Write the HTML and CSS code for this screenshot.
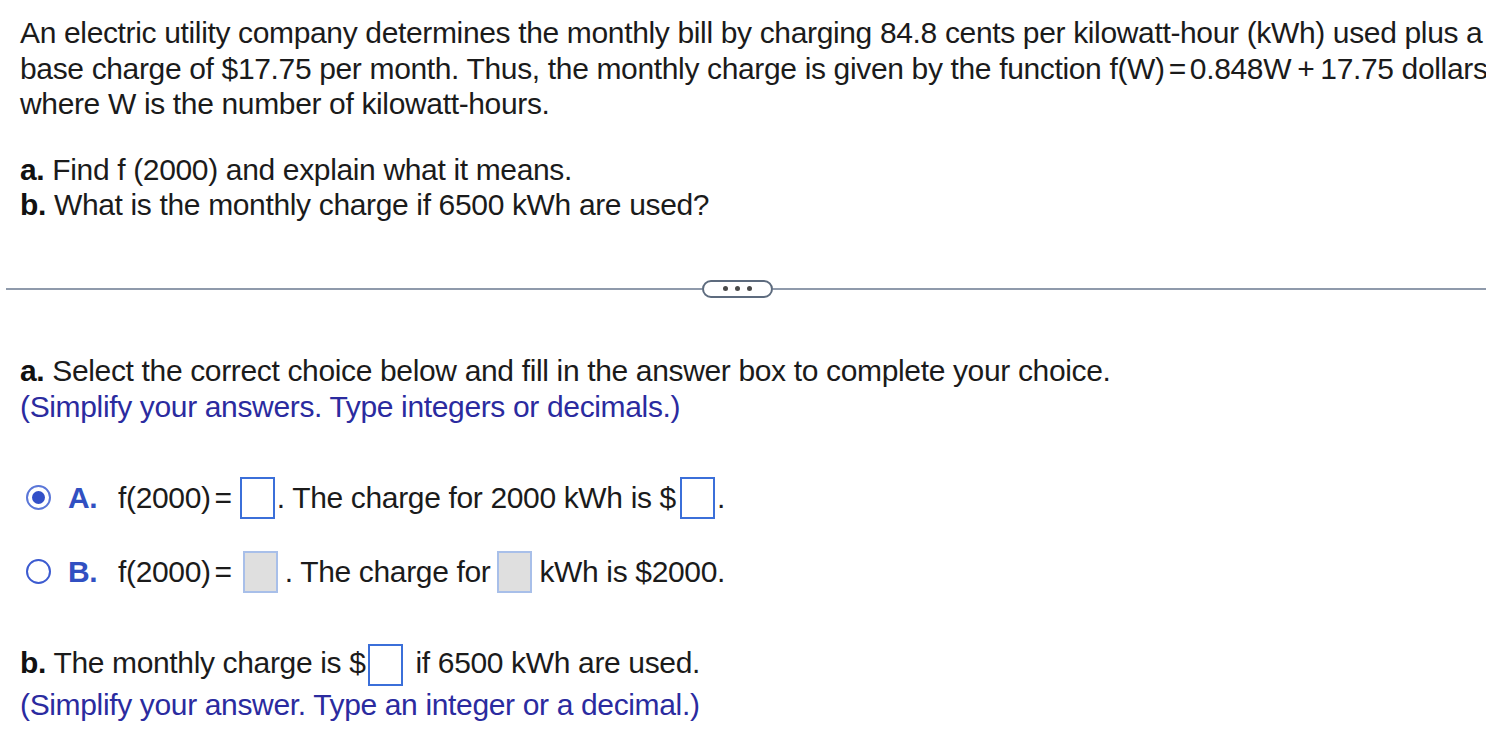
FILE: index.html
```html
<!DOCTYPE html>
<html>
<head>
<meta charset="utf-8">
<link rel="stylesheet" href="styles.css">
</head>
<body>
<div class="page">
  <div class="problem">
    <p class="line">An electric utility company determines the monthly bill by charging 84.8 cents per kilowatt-hour (kWh) used plus a</p>
    <p class="line">base charge of $17.75 per month. Thus, the monthly charge is given by the function <span class="math">f(W)<span class="eq">=</span>0.848W<span class="op">+</span>17.75</span> dollars,</p>
    <p class="line">where W is the number of kilowatt-hours.</p>
    <div class="parts">
      <p class="line"><b>a.</b> Find f (2000) and explain what it means.</p>
      <p class="line"><b>b.</b> What is the monthly charge if 6500 kWh are used?</p>
    </div>
  </div>

  <div class="divider">
    <div class="rule rule-left"></div>
    <div class="pill"><span class="dot"></span><span class="dot"></span><span class="dot"></span></div>
    <div class="rule"></div>
  </div>

  <div class="answer">
    <p class="line"><b>a.</b> Select the correct choice below and fill in the answer box to complete your choice.</p>
    <p class="line hint">(Simplify your answers. Type integers or decimals.)</p>

    <div class="choices">
      <div class="choice">
        <span class="radio checked"><span class="radio-dot"></span></span>
        <span class="letter">A.</span>
        <span class="choice-text"><span class="math">f(2000)<span class="eq">=</span></span><span class="box"></span>. The charge for 2000 kWh is $<span class="box"></span>.</span>
      </div>
      <div class="choice">
        <span class="radio"></span>
        <span class="letter">B.</span>
        <span class="choice-text"><span class="math">f(2000)<span class="eq">=</span></span><span class="box disabled"></span>. The charge for <span class="box disabled"></span> kWh is $2000.</span>
      </div>
    </div>

    <div class="part-b">
      <p class="line"><b>b.</b> The monthly charge is $<span class="box"></span> if 6500 kWh are used.</p>
      <p class="line hint">(Simplify your answer. Type an integer or a decimal.)</p>
    </div>
  </div>
</div>
</body>
</html>
```

FILE: styles.css
```css
html, body {
  margin: 0;
  padding: 0;
  background: #ffffff;
  overflow: hidden;
}

body {
  width: 1486px;
  height: 733px;
  font-family: "Liberation Sans", Arial, sans-serif;
  font-size: 30px;
  letter-spacing: -0.35px;
  line-height: 35.5px;
  color: #1b1b1b;
}

.page {
  padding-top: 15px;
}

.problem, .answer {
  padding-left: 20px;
}

.line {
  margin: 0;
  white-space: nowrap;
}

b {
  font-weight: bold;
  color: #111;
}

.parts {
  margin-top: 30px;
}

.math .eq {
  padding: 0 4px;
}

.math .op {
  padding: 0 6px;
}

.divider {
  display: flex;
  align-items: center;
  margin-top: 57px;
  margin-left: 6px;
}

.rule {
  flex: 1;
  height: 2px;
  background: #8f9aab;
}

.rule-left {
  flex: 0 0 696px;
}

.pill {
  width: 67px;
  height: 14px;
  border: 2px solid #5d6b7e;
  border-radius: 9px;
  display: flex;
  justify-content: center;
  align-items: center;
  gap: 7px;
  background: #fff;
}

.dot {
  width: 5px;
  height: 5px;
  border-radius: 50%;
  background: #4a4a4a;
}

.answer {
  margin-top: 55px;
}

.hint {
  color: #2b2b9f;
  margin-top: 1px;
}

.choices {
  margin-top: 52px;
  padding-left: 6px;
  display: flex;
  flex-direction: column;
  gap: 32px;
}

.choice {
  display: flex;
  align-items: center;
  height: 42px;
  white-space: nowrap;
}

.radio {
  width: 21px;
  height: 21px;
  border: 2px solid #3c5bd0;
  border-radius: 50%;
  display: flex;
  align-items: center;
  justify-content: center;
  box-sizing: content-box;
  margin-right: 17px;
}

.radio.checked {
  border-color: #5a76d8;
}

.radio-dot {
  width: 13px;
  height: 13px;
  border-radius: 50%;
  background: #3350c8;
}

.letter {
  font-weight: bold;
  color: #3150c2;
  width: 50px;
}

.choice-text {
  display: flex;
  align-items: center;
}

.box {
  display: inline-block;
  width: 31px;
  height: 38px;
  border: 2px solid #3b6fd9;
  background: #fff;
  vertical-align: middle;
  margin: 0 2px 0 4px;
}

.box.disabled {
  border-color: #a8bfe9;
  background: #dfdfdf;
  margin: 0 7px;
}

.part-b {
  margin-top: 51px;
}

.part-b .box {
  margin: 0 5px 0 2px;
}
```
